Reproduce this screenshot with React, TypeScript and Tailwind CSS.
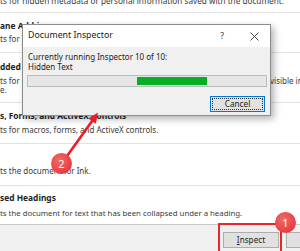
import React from "react";

function Row({
  pt,
  heading,
  desc,
  descMt,
  pb,
}: {
  pt: string;
  heading: React.ReactNode;
  desc: React.ReactNode;
  descMt: string;
  pb: string;
}) {
  return (
    <div className={`border-b border-[#e3e3e3] ${pt} ${pb}`}>
      <div className="h-[12px] leading-[12px] text-[8.4px] font-bold text-[#1e1e1e] whitespace-nowrap">
        {heading}
      </div>
      <div className={`${descMt} leading-[10px] text-[8px] text-[#3a3a3a] whitespace-nowrap`}>
        {desc}
      </div>
    </div>
  );
}

export default function App() {
  return (
    <div className="relative w-[300px] h-[251px] overflow-hidden bg-[#f0f0f0] font-['Noto_Sans',sans-serif]">
      {/* list panel */}
      <div className="bg-white border-b border-[#c9c9c9]">
        <div className="h-[13px] border-b border-[#e3e3e3] overflow-hidden">
          <div className="-mt-[4px] leading-[10px] text-[8.2px] text-[#3a3a3a] whitespace-nowrap">
            ts for hidden metadata or personal information saved with the document.
          </div>
        </div>
        <Row
          pt="pt-[7px]"
          pb="pb-[8px]"
          descMt="mt-[2px]"
          heading="ane Add-ins"
          desc="ts for Task Pane add-ins saved in the document."
        />
        <div className="border-b border-[#e3e3e3] pt-[8px] pb-[8px]">
          <div className="h-[12px] leading-[12px] text-[8.4px] font-bold text-[#1e1e1e] whitespace-nowrap">
            dded Documents
          </div>
          <div className="mt-[3px] leading-[9px] text-[8px] text-[#3a3a3a] whitespace-nowrap">
            <div className="flex">
              <span className="w-[270px] shrink-0 overflow-hidden">
                ts for embedded documents, which may include information that's not
              </span>
              <span>visible in the</span>
            </div>
            <div>e.</div>
          </div>
        </div>
        <Row
          pt="pt-[7px]"
          pb="pb-[8px]"
          descMt="mt-[3px]"
          heading="s, Forms, and ActiveX Controls"
          desc="ts for macros, forms, and ActiveX controls."
        />
        <Row
          pt="pt-[7px]"
          pb="pb-[9px]"
          descMt="mt-[3px]"
          heading=""
          desc="ts the document for Ink."
        />
        <div className="pt-[6px] pb-[6px]">
          <div className="h-[12px] leading-[12px] text-[8.4px] font-bold text-[#1e1e1e] whitespace-nowrap">
            sed Headings
          </div>
          <div className="mt-[4px] leading-[10px] text-[7.8px] text-[#3a3a3a] whitespace-nowrap">
            ts the document for text that has been collapsed under a heading.
          </div>
        </div>
      </div>

      {/* footer */}
      <div className="flex gap-[7px] pl-[223px] pt-[7px]">
        <div className="w-[56px] h-[16px] shrink-0 bg-[#e1e1e1] border border-[#adadad] flex items-center justify-center text-[8.2px] text-[#1e1e1e]">
          <span>
            <span className="underline">I</span>nspect
          </span>
        </div>
        <div className="w-[56px] h-[16px] shrink-0 bg-[#e1e1e1] border border-[#adadad] flex items-center justify-center text-[8.2px] text-[#1e1e1e]">
          Close
        </div>
      </div>

      {/* dialog */}
      <div className="absolute left-[22px] top-[24px] w-[249px] h-[92px] border border-[#8c8c8c] bg-[#f0f0f0] shadow-[3px_3px_7px_rgba(0,0,0,0.3)] flex flex-col">
        <div className="h-[22px] bg-white flex items-center pl-[5px] pr-[10px]">
          <span className="text-[8.8px] text-[#1a1a1a]">Document Inspector</span>
          <span className="ml-auto text-[8.6px] text-[#333] mr-[26px]">?</span>
          <svg width="9" height="9" viewBox="0 0 9 9" className="mr-[1px]">
            <path d="M0.5 0.5 L8.5 8.5 M8.5 0.5 L0.5 8.5" stroke="#333" strokeWidth="0.9" />
          </svg>
        </div>
        <div className="px-[4px] pt-[5px]">
          <div className="pl-[1px] leading-[10px] text-[8px] text-[#1a1a1a] whitespace-nowrap">
            Currently running Inspector 10 of 10:
          </div>
          <div className="pl-[1px] leading-[10px] text-[8px] text-[#1a1a1a]">Hidden Text</div>
          <div className="mt-[3px] h-[12px] w-[240px] border border-[#bcbcbc] bg-[#e6e6e6] pl-[109px] py-[1px]">
            <div className="h-full w-[70px] bg-[#06b025]" />
          </div>
          <div className="mt-[9px] flex justify-end pr-[1px]">
            <div className="w-[55px] h-[16px] border border-[#0078d7] bg-[#e1e1e1] p-[1px]">
              <div className="h-full w-full border border-dotted border-[#333] flex items-center justify-center text-[8.2px] text-[#1a1a1a]">
                Cancel
              </div>
            </div>
          </div>
        </div>
      </div>

      {/* annotations */}
      <div className="absolute left-[218px] top-[223px] w-[64px] h-[30px] border-2 border-[#e8262b]" />
      <svg className="absolute left-0 top-0" width="300" height="251">
        <line x1="62" y1="163" x2="92.5" y2="120.5" stroke="#ee1c24" strokeWidth="2.6" strokeLinecap="round" />
        <polygon points="98,112.5 95.8,123.7 88.5,118.5" fill="#ee1c24" />
      </svg>
      <div className="absolute left-[51px] top-[153px] w-[21px] h-[21px] rounded-full bg-[radial-gradient(circle_at_40%_35%,#f26a6a,#e12a2f)] flex items-center justify-center text-white text-[11px] leading-none">
        2
      </div>
      <div className="absolute left-[275px] top-[212px] w-[21px] h-[21px] rounded-full bg-[radial-gradient(circle_at_40%_35%,#f26a6a,#e12a2f)] flex items-center justify-center text-white text-[11px] leading-none">
        1
      </div>
    </div>
  );
}
